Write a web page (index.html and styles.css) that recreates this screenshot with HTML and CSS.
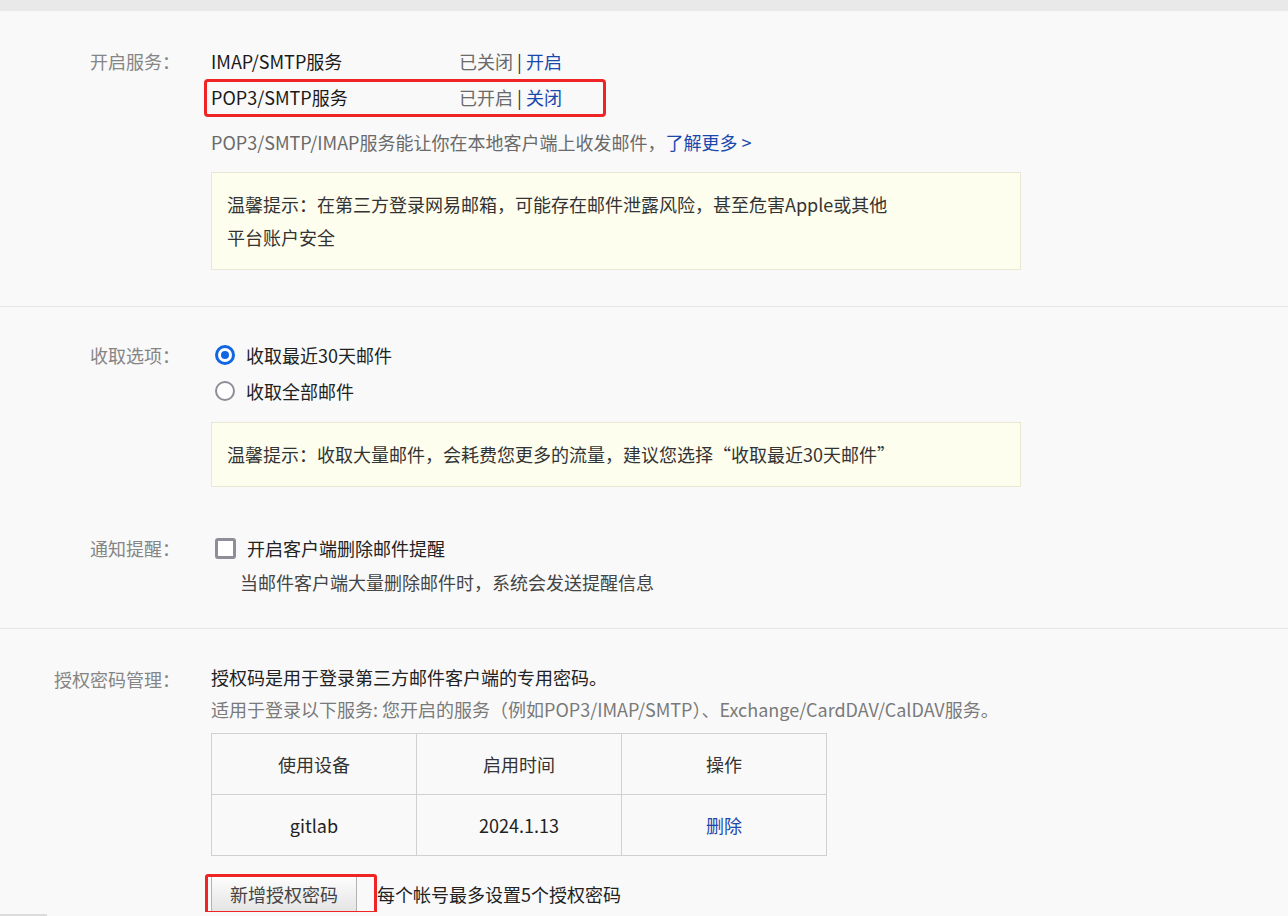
FILE: index.html
```html
<!DOCTYPE html>
<html lang="zh-CN">
<head>
<meta charset="utf-8">
<title>设置</title>
<link rel="stylesheet" href="styles.css">
</head>
<body>
<div class="topbar"></div>

<section class="block block-services">
  <div class="form-row">
    <div class="label">开启服务：</div>
    <div class="content">
      <div class="svc-row">
        <span class="svc-name">IMAP/SMTP服务</span>
        <span class="svc-status">已关闭 <span class="sep">|</span> <a class="link">开启</a></span>
      </div>
      <div class="svc-row mark">
        <span class="svc-name">POP3/SMTP服务</span>
        <span class="svc-status">已开启 <span class="sep">|</span> <a class="link">关闭</a></span>
      </div>
      <div class="desc">POP3/SMTP/IMAP服务能让你在本地客户端上收发邮件，<a class="link">了解更多&nbsp;&gt;</a></div>
      <div class="tip">温馨提示：在第三方登录网易邮箱，可能存在邮件泄露风险，甚至危害Apple或其他<br>平台账户安全</div>
    </div>
  </div>
</section>

<section class="block block-options">
  <div class="form-row">
    <div class="label">收取选项：</div>
    <div class="content">
      <div class="choice"><span class="radio on"></span><span>收取最近30天邮件</span></div>
      <div class="choice"><span class="radio"></span><span>收取全部邮件</span></div>
      <div class="tip tip-one">温馨提示：收取大量邮件，会耗费您更多的流量，建议您选择“收取最近30天邮件”</div>
    </div>
  </div>
  <div class="form-row notify">
    <div class="label">通知提醒：</div>
    <div class="content">
      <div class="choice"><span class="check"></span><span>开启客户端删除邮件提醒</span></div>
      <div class="sub">当邮件客户端大量删除邮件时，系统会发送提醒信息</div>
    </div>
  </div>
</section>

<section class="block block-auth">
  <div class="form-row">
    <div class="label">授权密码管理：</div>
    <div class="content">
      <div class="auth-line">授权码是用于登录第三方邮件客户端的专用密码。</div>
      <div class="auth-line muted">适用于登录以下服务: 您开启的服务（例如POP3/IMAP/SMTP）、Exchange/CardDAV/CalDAV服务。</div>
      <table class="devices">
        <thead>
          <tr><th>使用设备</th><th>启用时间</th><th>操作</th></tr>
        </thead>
        <tbody>
          <tr><td>gitlab</td><td>2024.1.13</td><td><a class="link">删除</a></td></tr>
        </tbody>
      </table>
      <div class="add-row">
        <span class="btn-wrap"><button class="btn">新增授权密码</button></span>
        <span class="add-note">每个帐号最多设置5个授权密码</span>
      </div>
    </div>
  </div>
</section>

<div class="hscroll"></div>
</body>
</html>
```

FILE: styles.css
```css
html, body {
  margin: 0;
  padding: 0;
}
body {
  background: #f9f9f9;
  font-family: "Noto Sans CJK SC", "Noto Sans", sans-serif;
  font-size: 18px;
  color: #222;
  overflow: hidden;
}
a.link {
  color: #1a48ad;
  text-decoration: none;
  cursor: pointer;
}
.topbar {
  height: 11px;
  background: #e9e9e9;
}
.block {
  border-bottom: 1px solid #e6e6e6;
}
.block-services {
  padding: 32px 0 36px;
}
.block-options {
  padding: 30px 0 30px;
}
.block-auth {
  padding: 32px 0 0;
  border-bottom: none;
}
.form-row {
  display: flex;
  align-items: flex-start;
}
.label {
  width: 180px;
  flex-shrink: 0;
  text-align: right;
  color: #858585;
  line-height: 36px;
}
.content {
  margin-left: 31px;
  flex: 1;
}
.svc-row {
  display: flex;
  line-height: 36px;
  position: relative;
}
.svc-row.mark::after {
  content: "";
  position: absolute;
  left: -7px;
  top: 0;
  width: 402px;
  height: 38px;
  border: 3px solid #ef2525;
  border-radius: 4px;
  box-sizing: border-box;
}
.svc-name {
  width: 248px;
  color: #1a1a1a;
}
.svc-status {
  color: #6a6a6a;
}
.sep {
  color: #333;
}
.desc {
  margin-top: 9px;
  line-height: 36px;
  color: #6a6a6a;
}
.tip {
  margin-top: 12px;
  width: 778px;
  padding: 15px 15px;
  background: #fefeee;
  border: 1px solid #e8e8d4;
  line-height: 33px;
  color: #333;
}
.tip-one {
  margin-top: 13px;
}
.choice {
  display: flex;
  align-items: center;
  line-height: 36px;
  color: #222;
}
.radio {
  width: 20px;
  height: 20px;
  box-sizing: border-box;
  border-radius: 50%;
  border: 2.5px solid #8e8e98;
  margin: 0 11px 0 4px;
  position: relative;
  background: #fff;
}
.radio.on {
  border: 3px solid #1266e3;
}
.radio.on::after {
  content: "";
  position: absolute;
  left: 50%;
  top: 50%;
  width: 8px;
  height: 8px;
  margin: -4px 0 0 -4px;
  border-radius: 50%;
  background: #1266e3;
}
.check {
  width: 21px;
  height: 21px;
  box-sizing: border-box;
  border: 3px solid #8e8e98;
  border-radius: 3px;
  margin: 0 11px 0 4px;
  background: #fff;
}
.notify {
  margin-top: 43px;
}
.sub {
  margin-left: 29px;
  line-height: 32px;
  color: #444;
}
.auth-line {
  line-height: 32px;
  color: #222;
}
.auth-line.muted {
  color: #7a7a7a;
}
.devices {
  margin-top: 8px;
  border-collapse: collapse;
  width: 616px;
  table-layout: fixed;
}
.devices th,
.devices td {
  border: 1px solid #d0d0d0;
  height: 60px;
  text-align: center;
  font-weight: normal;
  color: #333;
  padding: 0;
}
.devices td {
  color: #222;
}
.add-row {
  margin-top: 20px;
  display: flex;
  align-items: center;
}
.btn-wrap {
  position: relative;
  display: inline-block;
  margin-right: 20px;
}
.btn-wrap::after {
  content: "";
  position: absolute;
  left: -6px;
  top: -2px;
  right: -20px;
  bottom: -2px;
  border: 3px solid #ef2525;
  border-radius: 3px;
}
.btn {
  display: block;
  height: 36px;
  width: 146px;
  padding: 0;
  font-family: inherit;
  font-size: 18px;
  color: #444;
  background: linear-gradient(#fdfdfd, #e4e4e4);
  border: 1px solid #b4b4b4;
  border-radius: 0;
}
.add-note {
  color: #222;
  line-height: 36px;
}
.hscroll {
  position: fixed;
  left: 0;
  bottom: 0;
  width: 47px;
  height: 2px;
  background: #dcdcdc;
}
```
